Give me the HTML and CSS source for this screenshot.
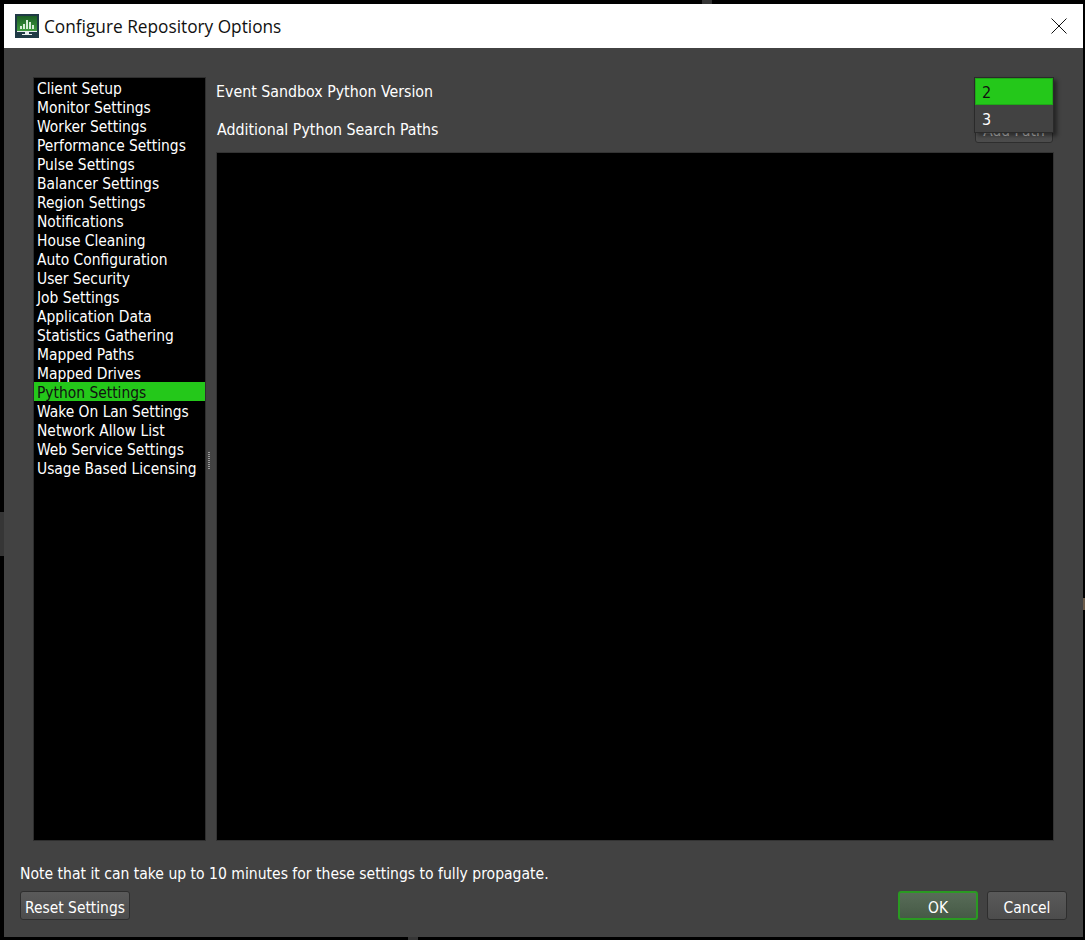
FILE: index.html
```html
<!DOCTYPE html>
<html lang="en">
<head>
<meta charset="utf-8">
<title>Configure Repository Options</title>
<link rel="stylesheet" href="styles.css">
</head>
<body>
<div class="window">
  <header class="titlebar">
    <svg class="app-icon" width="24" height="24" viewBox="0 0 24 24">
      <defs>
        <linearGradient id="screen" x1="0" y1="0" x2="0" y2="1">
          <stop offset="0" stop-color="#1c5f26"/>
          <stop offset="1" stop-color="#3f9a3c"/>
        </linearGradient>
      </defs>
      <rect width="24" height="24" fill="#1f3a45"/>
      <rect x="2" y="2" width="20" height="15" fill="url(#screen)"/>
      <path d="M5 12h2v3H5zM8 10h2v5H8zM11 6h2v9h-2zM14 8h2v7h-2zM17 11h2v4h-2z" fill="#d8ecd8"/>
      <path d="M2 17h20v1H2zM10 18h4v2h-4zM7 20h10v1H7z" fill="#e8eeee"/>
    </svg>
    <span class="title">Configure Repository Options</span>
    <svg class="close" width="16" height="16" viewBox="0 0 16 16">
      <path d="M0.5 0.5L15.5 15.5M15.5 0.5L0.5 15.5" stroke="#111" stroke-width="1" fill="none"/>
    </svg>
  </header>
  <main class="content">
    <div class="split">
      <ul class="nav">
        <li>Client Setup</li>
        <li>Monitor Settings</li>
        <li>Worker Settings</li>
        <li>Performance Settings</li>
        <li>Pulse Settings</li>
        <li>Balancer Settings</li>
        <li>Region Settings</li>
        <li>Notifications</li>
        <li>House Cleaning</li>
        <li>Auto Configuration</li>
        <li>User Security</li>
        <li>Job Settings</li>
        <li>Application Data</li>
        <li>Statistics Gathering</li>
        <li>Mapped Paths</li>
        <li>Mapped Drives</li>
        <li class="selected">Python Settings</li>
        <li>Wake On Lan Settings</li>
        <li>Network Allow List</li>
        <li>Web Service Settings</li>
        <li>Usage Based Licensing</li>
      </ul>
      <div class="splitter"><span class="grip"></span></div>
      <section class="panel">
        <div class="row row-version">
          <span class="label">Event Sandbox Python Version</span>
          <div class="combo">
            <ul class="popup">
              <li class="selected">2</li>
              <li>3</li>
            </ul>
          </div>
        </div>
        <div class="row row-paths">
          <span class="label label-paths">Additional Python Search Paths</span>
          <button class="btn btn-add">Add Path</button>
        </div>
        <div class="paths"></div>
      </section>
    </div>
    <p class="note">Note that it can take up to 10 minutes for these settings to fully propagate.</p>
    <footer class="actions">
      <button class="btn btn-reset">Reset Settings</button>
      <button class="btn btn-ok">OK</button>
      <button class="btn btn-cancel">Cancel</button>
    </footer>
  </main>
</div>
</body>
</html>
```
FILE: styles.css
```css
* { box-sizing: border-box; }
html, body { margin: 0; height: 100%; overflow: hidden; }
html {
  background:
    linear-gradient(#363636, #363636) 0 512px / 4px 44px no-repeat,
    linear-gradient(#363636, #363636) 702px 0 / 10px 4px no-repeat,
    linear-gradient(#363636, #363636) 408px 937px / 10px 3px no-repeat,
    linear-gradient(#6a5a48, #6a5a48) 1083px 598px / 2px 12px no-repeat,
    #000;
}
body { font-family: "DejaVu Sans", sans-serif; font-stretch: condensed; font-size: 15.4px; color: #fff; }
ul { list-style: none; margin: 0; padding: 0; }
.window {
  width: 1079px; height: 933px; margin: 4px 0 0 4px;
  display: flex; flex-direction: column; background: #424242;
}
.titlebar {
  height: 44px; flex: none; background: #fff; display: flex; align-items: center;
  padding: 0 16px 0 11px; color: #111;
}
.app-icon { flex: none; }
.title { margin-left: 5px; font-family: "Open Sans", sans-serif; font-stretch: normal; font-size: 17.25px; flex: 1; }
.close { flex: none; }
.content { flex: 1; display: flex; flex-direction: column; padding: 29px 16px 17px; }
.split { height: 764px; display: flex; padding: 0 13px; flex: none; }
.nav {
  width: 173px; flex: none; background: #000; border: 1px solid #2e2e2e;
}
.nav li { height: 19px; line-height: 23px; padding-left: 3px; white-space: nowrap; }
.nav .selected { background: #24c81a; color: #111; }
.splitter { width: 10px; flex: none; position: relative; }
.grip {
  position: absolute; left: 2px; top: 375px; width: 2px; height: 17px;
  background: repeating-linear-gradient(#9a9a9a 0 1px, transparent 1px 2px);
}
.panel { flex: 1; display: flex; flex-direction: column; min-width: 0; }
.row { display: flex; justify-content: space-between; align-items: flex-start; }
.row-version { height: 28px; }
.row-version .label { margin-top: 5px; }
.row-paths { height: 47px; }
.label { line-height: 20px; font-size: 15.8px; }
.label-paths { margin: 15px 0 0 1px; }
.combo { width: 80px; height: 26px; position: relative; }
.popup {
  position: absolute; left: 0; top: 0; width: 80px; height: 56px; z-index: 2;
  background: #424242; border: 1px solid #2a2a2a; box-shadow: 3px 3px 4px rgba(0,0,0,.45);
}
.popup li { height: 27px; line-height: 29px; padding-left: 7px; font-size: 16px; }
.popup .selected { background: #24c81a; color: #111; border: 1px solid #1fa818; line-height: 27px; padding-left: 6px; }
.btn {
  font: inherit; font-stretch: condensed; color: #fff; border: 1px solid #2e2e2e; border-radius: 3px;
  background: linear-gradient(#5a5a5a, #4c4c4c); height: 29px; padding: 4px 0 0;
}
.btn-add { width: 78px; margin: 9px 1px 0 0; color: #bdbdbd; }
.paths { flex: 1; background: #000; border: 1px solid #333; }
.note { margin: 23px 0 0; line-height: 20px; height: 20px; font-size: 15.55px; }
.actions { display: flex; margin-top: 7px; }
.btn-reset { width: 110px; margin-right: auto; }
.btn-ok { width: 80px; background: linear-gradient(#586c58, #465a46); border: 2px solid #2a9a22; }
.btn-cancel { width: 80px; margin-left: 9px; }
```
